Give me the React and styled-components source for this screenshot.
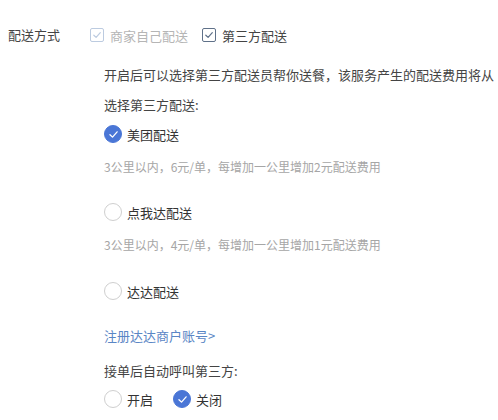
import React from "react";
import styled, { createGlobalStyle } from "styled-components";

const Global = createGlobalStyle`
  html, body { margin: 0; padding: 0; background: #fff; }
  body { font-family: "Noto Sans CJK SC", "Microsoft YaHei", sans-serif; font-size: 13px; color: #444; overflow: hidden; }
`;

const Page = styled.div`
  width: 498px;
  height: 420px;
  overflow: hidden;
  display: grid;
  grid-template-columns: 90px 1fr;
  padding-top: 25px;
  box-sizing: border-box;
`;

const Label = styled.div`
  padding-left: 8px;
  line-height: 20px;
  color: #444;
`;

const Content = styled.div`
  display: flex;
  flex-direction: column;
  min-width: 0;
`;

const CheckRow = styled.div`
  display: flex;
  align-items: center;
  height: 20px;
  gap: 14px;
`;

const CheckItem = styled.label`
  display: flex;
  align-items: center;
  gap: 6px;
  color: ${p => (p.$disabled ? "#b5b5b5" : "#444")};
  white-space: nowrap;
`;

const Box = styled.span`
  width: 14px;
  height: 14px;
  box-sizing: border-box;
  border: 1px solid ${p => (p.$disabled ? "#bccbe0" : "#5f7189")};
  border-radius: 2px;
  display: flex;
  align-items: center;
  justify-content: center;
  background: #fff;
`;

const Sub = styled.div`
  padding-left: 14px;
  display: flex;
  flex-direction: column;
`;

const Line = styled.div`
  line-height: 20px;
  white-space: nowrap;
  margin-top: ${p => p.$mt || 0}px;
  color: ${p => p.$color || "#444"};
  font-size: ${p => p.$size || 13}px;
`;

const Link = styled.a`
  line-height: 20px;
  color: #5a86c5;
  text-decoration: none;
  margin-top: ${p => p.$mt || 0}px;
`;

const RadioRow = styled.div`
  display: flex;
  align-items: center;
  height: 20px;
  gap: 20px;
  margin-top: ${p => p.$mt || 0}px;
`;

const RadioItem = styled.label`
  display: flex;
  align-items: center;
  gap: 5px;
  color: #333;
  white-space: nowrap;
`;

const Circle = styled.span`
  width: 18px;
  height: 18px;
  box-sizing: border-box;
  border-radius: 50%;
  border: 1px solid ${p => (p.$checked ? "#4a76d6" : "#cfcfcf")};
  background: ${p => (p.$checked ? "#4a76d6" : "#fff")};
  display: flex;
  align-items: center;
  justify-content: center;
`;

const Desc = styled.div`
  line-height: 20px;
  font-size: 12px;
  color: #a6a6a6;
  white-space: nowrap;
  margin-top: 13px;
`;

const Check = ({ color, size = 10 }) => (
  <svg width={size} height={size} viewBox="0 0 10 10" fill="none">
    <path d="M1.8 5.2 L4.1 7.4 L8.3 2.6" stroke={color} strokeWidth="1.2" strokeLinecap="round" strokeLinejoin="round" />
  </svg>
);

const Checkbox = ({ disabled, children }) => (
  <CheckItem $disabled={disabled}>
    <Box $disabled={disabled}>
      <Check color={disabled ? "#bccbe0" : "#5f7189"} />
    </Box>
    {children}
  </CheckItem>
);

const Radio = ({ checked, children }) => (
  <RadioItem>
    <Circle $checked={checked}>{checked && <Check color="#fff" size={11} />}</Circle>
    {children}
  </RadioItem>
);

export default function App() {
  return (
    <>
      <Global />
      <Page>
        <Label>配送方式</Label>
        <Content>
          <CheckRow>
            <Checkbox disabled>商家自己配送</Checkbox>
            <Checkbox>第三方配送</Checkbox>
          </CheckRow>
          <Sub>
            <Line $mt={20}>开启后可以选择第三方配送员帮你送餐，该服务产生的配送费用将从</Line>
            <Line $mt={10}>选择第三方配送:</Line>
            <RadioRow $mt={9}>
              <Radio checked>美团配送</Radio>
            </RadioRow>
            <Desc>3公里以内，6元/单，每增加一公里增加2元配送费用</Desc>
            <RadioRow $mt={25}>
              <Radio>点我达配送</Radio>
            </RadioRow>
            <Desc>3公里以内，4元/单，每增加一公里增加1元配送费用</Desc>
            <RadioRow $mt={26}>
              <Radio>达达配送</Radio>
            </RadioRow>
            <Link href="#" $mt={25}>注册达达商户账号&gt;</Link>
            <Line $mt={15}>接单后自动呼叫第三方:</Line>
            <RadioRow $mt={8}>
              <Radio>开启</Radio>
              <Radio checked>关闭</Radio>
            </RadioRow>
          </Sub>
        </Content>
      </Page>
    </>
  );
}
